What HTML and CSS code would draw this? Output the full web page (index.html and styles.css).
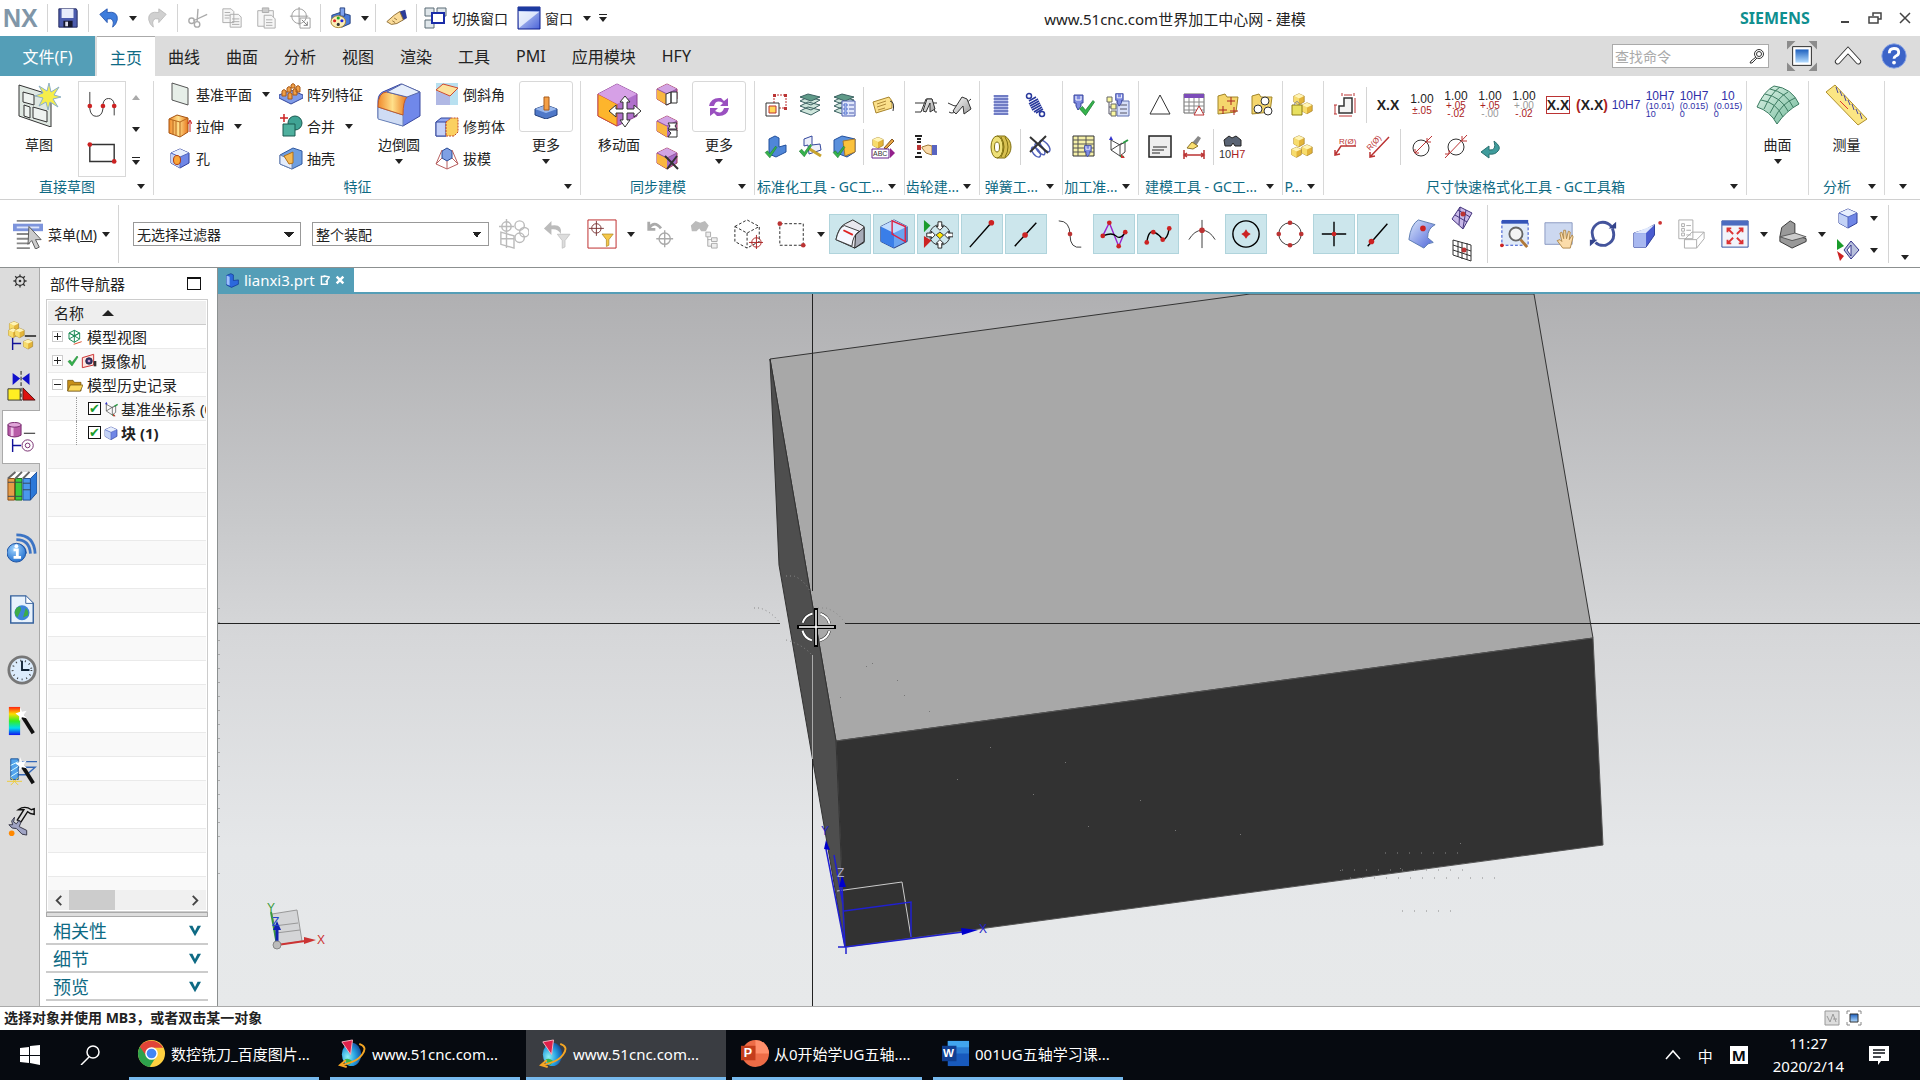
FILE: index.html
```html
<!DOCTYPE html>
<html lang="zh-CN">

<head>
  <meta charset="utf-8">
  <meta name="viewport" content="width=device-width, initial-scale=1">
  <title>www.51cnc.com世界加工中心网 - 建模</title>
  <link rel="stylesheet" href="styles.css">
</head>

<body>
  <!-- shared gradients and symbols -->
  <svg class="defs" aria-hidden="true">
    <defs>
      <linearGradient id="blue" x1="0" y1="0" x2="1" y2="1"><stop offset="0" stop-color="#dce8fb"/><stop offset="1" stop-color="#4a62d8"/></linearGradient>
      <linearGradient id="gold" x1="0" y1="0" x2="1" y2="1"><stop offset="0" stop-color="#fdf3a8"/><stop offset="1" stop-color="#e0a52c"/></linearGradient>
      <linearGradient id="orange" x1="0" y1="0" x2="1" y2="0"><stop offset="0" stop-color="#f08a2c"/><stop offset=".5" stop-color="#ffe08a"/><stop offset="1" stop-color="#e87820"/></linearGradient>
      <linearGradient id="grey" x1="0" y1="0" x2="1" y2="1"><stop offset="0" stop-color="#fff"/><stop offset="1" stop-color="#9a9a9a"/></linearGradient>
      <linearGradient id="green" x1="0" y1="0" x2="1" y2="1"><stop offset="0" stop-color="#e4f6ec"/><stop offset="1" stop-color="#6fb898"/></linearGradient>
      <linearGradient id="rainbow" x1="0" y1="0" x2="0" y2="1"><stop offset="0" stop-color="#f21"/><stop offset=".25" stop-color="#fd0"/><stop offset=".5" stop-color="#3e2"/><stop offset=".75" stop-color="#0de"/><stop offset="1" stop-color="#11e"/></linearGradient>
      <linearGradient id="screen" x1="0" y1="0" x2="0" y2="1"><stop offset="0" stop-color="#1c5fbe"/><stop offset="1" stop-color="#b4dcff"/></linearGradient>
      <radialGradient id="ball" cx=".4" cy=".3" r=".8"><stop offset="0" stop-color="#9fd4ff"/><stop offset="1" stop-color="#1464c8"/></radialGradient>
      <radialGradient id="globe" cx=".3" cy=".6" r=".8"><stop offset="0" stop-color="#8cf0f4"/><stop offset=".5" stop-color="#28a0e0"/><stop offset="1" stop-color="#0c3c90"/></radialGradient>
    </defs>
    <symbol id="cube" viewBox="0 0 24 24">
      <path d="M3 7l9-4 9 4v10l-9 5-9-5z" fill="#6f86e6" stroke="#2f3f9a"/>
      <path d="M3 7l9 4v11l-9-5z" fill="#c3d2f6"/><path d="M3 7l9-4 9 4-9 4z" fill="#e8effd"/>
      <path d="M3 7l9 4 9-4M12 11v11" fill="none" stroke="#5468c0"/>
    </symbol>
    <symbol id="pcube" viewBox="0 0 24 24">
      <path d="M2 7l10-5 10 5v10l-10 6-10-6z" fill="#a66cc8" stroke="#a63a5a"/>
      <path d="M2 7l10 5v11L2 17z" fill="#f9b640"/><path d="M2 7l10-5 10 5-10 5z" fill="#d2a4e4"/>
      <path d="M2 7l10 5 10-5" fill="none" stroke="#94549e"/>
    </symbol>
    <symbol id="ycube" viewBox="0 0 24 24">
      <path d="M3 7l9-4 9 4v10l-9 5-9-5z" fill="#e3b43a" stroke="#94701a"/>
      <path d="M3 7l9 4v11l-9-5z" fill="#f7dc6c"/><path d="M3 7l9-4 9 4-9 4z" fill="#fff4b4"/>
    </symbol>
    <symbol id="check" viewBox="0 0 24 24"><path d="M2 13l4-3 4 5L20 2l2 2-12 18z" fill="#35b34c" stroke="#1b7a30"/></symbol>
    <symbol id="sheets" viewBox="0 0 24 24">
      <path d="M2 18l8-4 12 3-9 5zM2 13l8-4 12 3-9 5zM2 8l8-4 12 3-9 5z" fill="#cfe6dc" stroke="#3c6262"/>
      <path d="M2 4l8-3 12 3-9 4z" fill="#5f9a88" stroke="#3c6262"/>
    </symbol>
    <symbol id="cutter" viewBox="0 0 24 24"><path d="M2 2h9v8H9v3l-3 4-2-4v-3H2z" fill="#7d8ae0" stroke="#39459c"/><path d="M4 3v4h5V3" fill="none" stroke="#fff"/></symbol>
    <symbol id="csys" viewBox="0 0 24 24"><path d="M5 3v12l9 6M5 15l11-7M5 5l9 5v11M14 10l5-3v10l-5 4" fill="none" stroke="#444"/><path d="M17 8l5-3M14 21l4 1" stroke="#2a9a44" stroke-width="2"/><path d="M3 5l2-4 2 4z" fill="#33c"/><path d="M15 19l4 4h-4z" fill="#c33"/></symbol>
    <symbol id="funnel" viewBox="0 0 24 24"><path d="M3 3h18l-7 9v9l-4 2V12z"/></symbol>
    <symbol id="nxball" viewBox="0 0 30 30">
      <ellipse cx="14" cy="16" rx="10" ry="12" fill="url(#globe)"/><path d="M7 21q4-2 8 2l-3 4q-4-2-5-6z" fill="#39b54a"/>
      <path d="M4 3l11-2-2 15z" fill="#e0204a" stroke="#f8b0c0"/><path d="M22 5q9 3 3 11-4 6-14 9l-7 2M8 22l-6 5 7 2" fill="none" stroke="#f5a623" stroke-width="2"/>
    </symbol>
  </svg>

  <header class="titlebar">
    <span class="nx">NX</span><i class="sep"></i>
    <button class="qa" title="保存"><svg viewBox="0 0 24 24"><path d="M2 2h19l1 2v18H2z" fill="#4c5cae" stroke="#20265c"/><path d="M5 2h13v10H5z" fill="#e8ecfb"/><path d="M7 15h10v7H7z" fill="#16182e"/><path d="M9 16h3v5H9z" fill="#dde"/></svg></button><i class="sep"></i>
    <button class="qa" title="撤消"><svg viewBox="0 0 24 24"><path d="M2 8l8-6v4q12-2 11 8-1 5-5 8 3-11-6-9v4z" fill="#3f7ddc" stroke="#2858b0"/></svg></button>
    <button class="dd" title="撤消列表"></button>
    <button class="qa" title="重做"><svg viewBox="0 0 24 24"><path d="M22 8l-8-6v4Q2 4 3 14q1 5 5 8-3-11 6-9v4z" fill="#d0d0d0" stroke="#bbb"/></svg></button><i class="sep"></i>
    <button class="qa" title="剪切"><svg viewBox="0 0 24 24" fill="none" stroke="#aaa" stroke-width="1.500"><path d="M12 2l-1 14M22 8L7 15"/><circle cx="5" cy="15" r="3"/><circle cx="11" cy="19" r="3"/></svg></button>
    <button class="qa" title="复制"><svg viewBox="0 0 24 24" fill="#f6f6f6" stroke="#aaa"><path d="M2 2h9l3 3v12H2zM10 8h9l3 3v11H10z"/><path d="M4 6h6M4 9h6M4 12h5M12 13h8M12 16h8M12 19h8"/></svg></button>
    <button class="qa" title="粘贴"><svg viewBox="0 0 24 24" fill="#f6f6f6" stroke="#aaa"><path d="M3 4h17v17H3z"/><path d="M8 1h7v5H8z" fill="#ccc"/><path d="M10 9h8l4 4v10H10z"/><path d="M12 14h7M12 17h7M12 20h7"/></svg></button>
    <button class="qa" title="定位"><svg viewBox="0 0 24 24" fill="none" stroke="#999"><circle cx="11" cy="10" r="8"/><path d="M11 0v20M1 10h20M12 12h11v11H12z"/><path d="M14 14l6 6m0-4v4h-4" stroke="#777"/></svg></button><i class="sep"></i>
    <button class="qa" title="调色板"><svg viewBox="0 0 24 24"><path d="M2 9l9-3 11 3v9l-9 4-11-4z" fill="#4a7ad8" stroke="#23407c"/><path d="M11 1h5v9h-5z" fill="#7fa2ec" stroke="#23407c"/><ellipse cx="9" cy="16" rx="8" ry="6.500" fill="#fbeeb8" stroke="#a8842c"/><circle cx="5" cy="15" r="1.700" fill="#d22"/><circle cx="9" cy="12" r="1.700" fill="#2a2"/><circle cx="13" cy="15" r="1.700" fill="#22d"/><circle cx="9" cy="19" r="1.700" fill="#333"/></svg></button>
    <button class="dd" title="显示列表"></button><i class="sep"></i>
    <button class="qa" title="触摸"><svg viewBox="0 0 24 24"><path d="M16 5l6-2 2 9-5 3z" fill="#2c3c98"/><path d="M2 16l8-7 6-4 4 9-7 4-6 1z" fill="#fbdc9a" stroke="#8c6a30"/><path d="M10 12l3 2M8 15l3 2" stroke="#8c6a30"/></svg></button><i class="sep"></i>
    <button class="wide"><svg viewBox="0 0 24 24"><path d="M1 2h9v8H1zM13 2h9v8h-9zM1 14h9v8H1z" fill="#dfe6ea" stroke="#5a6a74"/><path d="M8 7h12v10H8z" fill="#fff" stroke="#1a2ca8" stroke-width="2"/></svg>切换窗口</button>
    <button class="wide"><svg viewBox="0 0 24 24"><path d="M1 1h22v22H1z" fill="url(#blue)" stroke="#0c1c8c"/><path d="M1 1h22v4H1z" fill="#1c3aa0"/><path d="M2 6h20L2 22z" fill="#f2f7ff" opacity=".8"/></svg>窗口<i class="tri"></i></button>
    <button class="dd bar" title="自定义"></button>
    <h1>www.51cnc.com世界加工中心网 - 建模</h1>
    <span class="siemens">SIEMENS</span>
    <button class="win" title="最小化"><svg viewBox="0 0 14 14"><path d="M3 11h8" stroke="#444" stroke-width="2"/></svg></button>
    <button class="win" title="还原"><svg viewBox="0 0 14 14" fill="none" stroke="#444" stroke-width="1.500"><path d="M5 5V2h8v6h-3M1 6h9v6H1z"/></svg></button>
    <button class="win" title="关闭"><svg viewBox="0 0 14 14"><path d="M2 2l10 10M12 2L2 12" stroke="#444" stroke-width="1.500"/></svg></button>
  </header>

  <nav class="tabs">
    <button class="file">文件(F)</button>
    <button class="active">主页</button>
    <button>曲线</button>
    <button>曲面</button>
    <button>分析</button>
    <button>视图</button>
    <button>渲染</button>
    <button>工具</button>
    <button>PMI</button>
    <button>应用模块</button>
    <button>HFY</button>
    <label class="search"><input type="text" placeholder="查找命令" aria-label="查找命令"><svg viewBox="0 0 16 16" fill="none" stroke="#333"><circle cx="10" cy="6" r="4.500"/><circle cx="10" cy="6" r="2.500"/><path d="M7 9l-5 4-1 2 2 0 5-5" fill="#fff"/></svg></label>
    <button class="round" title="全屏"><svg viewBox="0 0 32 32"><path d="M0 0h9L0 9zM32 0v9l-9-9zM0 32v-9l9 9zM32 32h-9l9-9z" fill="#8c8c8c"/><path d="M6 6h20v20H6z" fill="#fff" stroke="#222"/><path d="M9 9h14v14H9z" fill="url(#screen)"/></svg></button>
    <button class="round" title="最小化功能区"><svg viewBox="0 0 32 32"><path d="M5 22l11-12 11 12" fill="none" stroke="#333" stroke-width="6" stroke-linecap="round"/><path d="M5 22l11-12 11 12" fill="none" stroke="#fff" stroke-width="4" stroke-linecap="round"/></svg></button>
    <button class="round" title="帮助"><svg viewBox="0 0 32 32"><circle cx="16" cy="16" r="13" fill="#3c64c8" stroke="#8aa4e4"/><path d="M11 13q0-5 5-5t5 4q0 3-3 4-2 1-2 3" fill="none" stroke="#fff" stroke-width="3"/><circle cx="16" cy="23" r="2" fill="#fff"/></svg></button>
  </nav>

  <section class="ribbon">
    <div class="group">
      <div class="body">
        <button class="big first"><svg viewBox="0 0 44 44"><path d="M2 2l32 10v32L2 33z" fill="#dfe8e2" stroke="#333"/><path d="M6 9l11 3v10L6 19zM7 22l6 2v11l-6-2zM16 24l14 4v11l-14-4z" fill="#eef3f0" stroke="#333"/><path d="M32 0l2 9 8-5-5 8 7 2-8 2 5 8-8-5-2 8-2-8-7 4 4-8-8-2 8-3-4-7 8 5z" fill="#f6ee4a" stroke="#8cb0c8"/></svg>草图</button>
        <div class="gallery">
          <button title="轮廓"><svg viewBox="0 0 32 32"><path d="M3 1v18q1 8 7 8t7-8V14q1-6 6-6t6 6v12" fill="none" stroke="#333"/><g fill="#c22"><circle cx="3" cy="16" r="2.500"/><circle cx="17" cy="16" r="2.500"/><circle cx="29" cy="16" r="2.500"/></g></svg></button>
          <button title="矩形"><svg viewBox="0 0 32 32"><path d="M3 7h26v18H3z" fill="none" stroke="#333" stroke-width="1.500"/><g fill="#c22"><circle cx="3" cy="7" r="2.500"/><circle cx="29" cy="25" r="2.500"/></g></svg></button>
        </div>
        <div class="scroller"><button class="dd up" title="上一行"></button><button class="dd" title="下一行"></button><button class="dd bar" title="展开"></button></div>
      </div>
      <footer><span>直接草图</span><button class="dd" title="直接草图选项"></button></footer>
    </div>

    <div class="group">
      <div class="body features">
        <div class="rows">
          <button><svg viewBox="0 0 24 24"><path d="M4 1l16 5v17L4 18z" fill="#e6eee8" stroke="#555"/></svg>基准平面<i class="tri far"></i></button>
          <button><svg viewBox="0 0 24 24"><path d="M1 5l8-4 11 3v14l-8 5-11-4z" fill="url(#orange)" stroke="#a65412"/><path d="M1 5l11 3 8-4M12 8v15M5 6v14M8 7v14" fill="none" stroke="#b8681e"/><path d="M22 18V7m-2 3l2-4 2 4" stroke="#c22" fill="none"/></svg>拉伸<i class="tri"></i></button>
          <button><svg viewBox="0 0 24 24"><use href="#cube"/><ellipse cx="9" cy="14" rx="3.500" ry="4.500" fill="#f9a63a" stroke="#b03a10"/></svg>孔</button>
        </div>
        <div class="rows">
          <button><svg viewBox="0 0 24 24"><path d="M0 13l12-5 12 5v3l-12 6-12-6z" fill="#7f9be8" stroke="#33479c"/><path d="M3 9q2-3 4 0v5H3zM9 12q2-3 4 0v5H9zM8 6q2-3 4 0v4H8zM14 8q2-3 4 0v5h-4zM12 3q2-3 4 0v3h-4zM17 5q2-3 4 0v5h-4z" fill="#f0a048" stroke="#a85a18"/></svg>阵列特征</button>
          <button><svg viewBox="0 0 24 24"><circle cx="16" cy="9" r="7" fill="#3fa394" stroke="#1a5a50"/><path d="M4 10h12v12H4z" fill="#4fb09e" stroke="#1a5a50"/><path d="M5 0v8M1 4h8" stroke="#c22" stroke-width="1.500"/></svg>合并<i class="tri"></i></button>
          <button><svg viewBox="0 0 24 24"><path d="M1 9l13-7 9 3v13l-10 5-12-5z" fill="#6f9fe0" stroke="#3058a0"/><path d="M1 9l12 5v9L1 18z" fill="#e4ecfa" stroke="#6a82b0"/><path d="M5 10l9-4v11l-4 1z" fill="#f5b954" stroke="#b07018"/></svg>抽壳</button>
        </div>
        <button class="big"><svg viewBox="0 0 44 44"><path d="M1 18Q1 10 8 8L24 1l19 8v24L26 43 1 35z" fill="#7088ea" stroke="#3848a0"/><path d="M1 24l25 8v11L1 36z" fill="#cfdcf4" stroke="#6a82b8"/><path d="M1 24Q1 9 10 9l20 5q-4 4-4 18z" fill="url(#orange)" stroke="#c25a28"/><path d="M10 9l15-8 18 8-13 5z" fill="#e6eefb" stroke="#5868a8"/></svg>边倒圆<i class="tri"></i></button>
        <div class="rows">
          <button><svg viewBox="0 0 24 24"><path d="M1 1h22v22H1z" fill="#b8e0f0"/><path d="M1 9l14 5v9H1z" fill="#b0b8e4"/><path d="M1 8l7-6 15 4-8 8z" fill="#fce29c" stroke="#d04830"/></svg>倒斜角</button>
          <button><svg viewBox="0 0 24 24"><path d="M1 8l5-4h10v14l-5 4H1z" fill="#8fa4ee" stroke="#33479c"/><path d="M1 8h10v14H1z" fill="#c4d0f8" stroke="#33479c"/><path d="M11 8l5-4h7v14l-4 4h-8z" fill="#fbd060" stroke="#c04828" stroke-dasharray="2 1"/></svg>修剪体</button>
          <button><svg viewBox="0 0 24 24"><path d="M7 5l5-3 5 3v7l-5 3-5-3z" fill="#7fa0e4" stroke="#2a4a94"/><path d="M7 4L1 18l11 5 11-5-6-14M12 15v8M1 18l6-6M23 18l-6-6" fill="none" stroke="#b86060"/></svg>拔模</button>
        </div>
        <button class="big more"><span class="frame"><svg viewBox="0 0 24 24"><path d="M1 14l11-4 11 4v6l-11 4-11-4z" fill="#4f78c8" stroke="#23407c"/><path d="M1 14l11-4 11 4-11 4z" fill="#9ab8ec"/><path d="M10 2h5v13h-5z" fill="#f4a048" stroke="#a85a18"/></svg></span>更多<i class="tri"></i></button>
      </div>
      <footer><span>特征</span><button class="dd" title="特征选项"></button></footer>
    </div>

    <div class="group">
      <div class="body sync">
        <button class="big"><svg viewBox="0 0 44 44"><path d="M1 11L20 1l20 10v22L20 43 1 33z" fill="#b070cc" stroke="#8c4090"/><path d="M1 11l19 10v22L1 33z" fill="#fdb52c" stroke="#d05030"/><path d="M1 11L20 1l20 10-20 10z" fill="#d6a0e6"/><path d="M28 13l5 6h-3v7h7v-4l7 6-7 6v-4h-7v7h3l-5 7-5-7h3v-7h-7v4l-7-6 7-6v4h7v-7h-3z" fill="#fff" stroke="#333"/></svg>移动面</button>
        <div class="rows icons">
          <button title="拉出面"><svg viewBox="0 0 24 24"><use href="#pcube"/><path d="M11 12l5-2v11l-5 2zM16 10h6v11h-6z" fill="#fff" stroke="#333"/></svg></button>
          <button title="替换面"><svg viewBox="0 0 24 24"><use href="#pcube"/><path d="M13 9h9l-2 3 2 3h-9l2-3zM13 16h9v7h-9l3-4z" fill="#fff" stroke="#333"/></svg></button>
          <button title="删除面"><svg viewBox="0 0 24 24"><use href="#pcube"/><path d="M10 10l13 13M22 10L12 23" stroke="#333" stroke-width="2"/></svg></button>
        </div>
        <button class="big more"><span class="frame"><svg viewBox="0 0 24 24"><path d="M2 11Q4 2 14 3l3 3 4-3v8h-8l3-3q-7-4-9 3zM22 13q-2 9-12 8l-3-3-4 3v-8h8l-3 3q7 4 9-3z" fill="#9a50c0"/></svg></span>更多<i class="tri"></i></button>
      </div>
      <footer><span>同步建模</span><button class="dd" title="同步建模选项"></button></footer>
    </div>

    <div class="group">
      <div class="body grid2">
        <div>
          <button class="sm" title="部件间复制"><svg viewBox="0 0 24 24" fill="none" stroke="#333"><path d="M10 2h12v13H10z" stroke="#b33" stroke-dasharray="2 1"/><path d="M2 10h13v13H2z" fill="#fff"/><path d="M5 13h7v7H5z" fill="#ffd75a" stroke="#b33"/><path d="M9 1h3v3H9zM20 1h3v3h-3zM20 14h3v3h-3z" fill="#b33" stroke="none"/></svg></button>
          <button class="sm" title="图层"><svg viewBox="0 0 24 24"><use href="#sheets"/></svg></button>
          <button class="sm" title="图层列表"><svg viewBox="0 0 24 24"><use href="#sheets"/><path d="M10 8h13v15H10z" fill="#dfe6fb" stroke="#5060b0"/><path d="M12 11h3v2h-3zM12 15h3v2h-3zM12 19h3v2h-3z" fill="#fff" stroke="#46c"/><path d="M17 12h5M17 16h5M17 20h5" stroke="#5060b0"/></svg></button><i class="sep"></i>
          <button class="sm" title="属性"><svg viewBox="0 0 24 24"><path d="M2 9l16-5 3 4v7L5 20z" fill="#fbe08a" stroke="#a8842c"/><path d="M6 11l9-3M6 14l9-3M7 17l7-2" stroke="#b08a3a"/><path d="M19 8q5 1 3 10" fill="none" stroke="#333"/></svg></button>
        </div>
        <div>
          <button class="sm" title="检查模型"><svg viewBox="0 0 24 24"><path d="M5 4l6-3 4 2v9l7-2v7l-10 5-7-3z" fill="#4f86d8" stroke="#23509c"/><use href="#check" y="10" width="14" height="14"/></svg></button>
          <button class="sm" title="检查草图"><svg viewBox="0 0 24 24"><path d="M6 4l8-3v9l8-1 1 6-12 4-1-9-4 1z" fill="#eef0fb" stroke="#33479c"/><path d="M10 13l13 8" stroke="#c8a430" stroke-width="3"/><use href="#check" y="8" width="15" height="15"/></svg></button>
          <button class="sm" title="检查装配"><svg viewBox="0 0 24 24"><path d="M2 5l8-4 13 3v13l-8 5-13-5z" fill="#5a90dc" stroke="#23509c"/><path d="M11 6l12-2v13l-10 4z" fill="#fbc23c" stroke="#a8782c"/><use href="#check" y="10" width="14" height="14"/></svg></button><i class="sep"></i>
          <button class="sm" title="注释编辑"><svg viewBox="0 0 24 24"><use href="#ycube" width="14" height="15"/><path d="M13 13l8-9 2 2-8 8z" fill="#e8a848" stroke="#85541c"/><path d="M1 14h17v9H1z" fill="#fff" stroke="#66208c"/><text x="2" y="21" font-size="7" fill="#333">ABC</text><path d="M19 13l5 5-5 5z" fill="#94208c"/></svg></button>
        </div>
      </div>
      <footer><span>标准化工具 - GC工...</span><button class="dd" title="标准化工具选项"></button></footer>
    </div>

    <div class="group">
      <div class="body grid2">
        <div>
          <button class="sm" title="柱齿轮"><svg viewBox="0 0 24 24"><path d="M1 19h6l5-13h6l3 13h2M1 10h9M18 10h5" fill="none" stroke="#333"/><path d="M9 18l4-12h5l3 10-5 3 0-9-4 9z" fill="url(#grey)" stroke="#333"/></svg></button>
          <button class="sm" title="锥齿轮"><svg viewBox="0 0 24 24"><path d="M0 10q12 8 23-4M1 19q4 3 9-3" fill="none" stroke="#333"/><path d="M5 18L14 4l5 2 4 10-7 5-1-8-7 8z" fill="url(#grey)" stroke="#333"/></svg></button>
        </div>
        <div>
          <button class="sm" title="齿轮副"><svg viewBox="0 0 24 24"><path d="M1 1h7M3 4h4M3 7h4M3 18h4M1 22h7" stroke="#222" stroke-width="2"/><path d="M3 10h4v5H3z" fill="#b33"/><path d="M8 12l6-2 4 1v9l-6-2-4-5z" fill="#fbdcaa" stroke="#a07838"/><path d="M18 10h5v10h-5z" fill="#5864c0"/></svg></button>
        </div>
      </div>
      <footer><span>齿轮建...</span><button class="dd" title="齿轮建模选项"></button></footer>
    </div>

    <div class="group">
      <div class="body grid2">
        <div>
          <button class="sm" title="圆柱压缩弹簧"><svg viewBox="0 0 24 24"><path d="M5 2h14v20H5z" fill="#b8c0ec"/><path d="M5 3h14M5 6h14M5 9h14M5 12h14M5 15h14M5 18h14M5 21h14" stroke="#28389c" stroke-linecap="round"/></svg></button>
          <button class="sm" title="圆柱拉伸弹簧"><svg viewBox="0 0 24 24" fill="none" stroke="#28389c" stroke-width="1.500"><circle cx="6" cy="3" r="2.500"/><circle cx="19" cy="21" r="2.500"/><path d="M6 8l7-4M6 11l9-5M7 13l9-5M8 15l9-5M9 17l9-5M11 19l8-5M13 20l7-4"/></svg></button>
        </div>
        <div>
          <button class="sm" title="碟簧"><svg viewBox="0 0 24 24"><path d="M8 1h8q6 4 6 11t-6 11H8z" fill="#d8c050" stroke="#807010"/><path d="M12 2q6 10 0 20M16 2q6 10 0 20" fill="none" stroke="#807010"/><ellipse cx="8" cy="12" rx="6" ry="11" fill="#eee078" stroke="#807010"/><ellipse cx="8" cy="12" rx="2.500" ry="5" fill="#fff" stroke="#807010"/></svg></button><i class="sep"></i>
          <button class="sm" title="删除弹簧"><svg viewBox="0 0 24 24" fill="none" stroke="#5060b8" stroke-width="1.500"><ellipse cx="8" cy="17" rx="3" ry="6" transform="rotate(-40 8 17)"/><ellipse cx="12" cy="14" rx="3" ry="7" transform="rotate(-40 12 14)"/><ellipse cx="17" cy="11" rx="3" ry="7" transform="rotate(-40 17 11)"/><path d="M2 2l18 16M18 1L2 17" stroke="#333" stroke-width="2"/></svg></button>
        </div>
      </div>
      <footer><span>弹簧工...</span><button class="dd" title="弹簧工具选项"></button></footer>
    </div>

    <div class="group">
      <div class="body grid2">
        <div>
          <button class="sm" title="加工检查"><svg viewBox="0 0 24 24"><use href="#cutter"/><use href="#check" x="6" y="6" width="18" height="18"/></svg></button>
          <button class="sm" title="加工列表"><svg viewBox="0 0 24 24"><path d="M11 8h12v15H11z" fill="#d8e0f8" stroke="#6070b0"/><path d="M14 12h7M14 16h7M14 20h7M3 8v13h6M3 14h6" stroke="#556" fill="none"/><path d="M1 4h5v5H1zM5 11h5v5H5zM5 18h5v5H5z" fill="#fbf8a0" stroke="#666"/><use href="#cutter" x="8" y="-1" width="20" height="20"/></svg></button>
        </div>
        <div>
          <button class="sm" title="刀具表"><svg viewBox="0 0 24 24"><path d="M1 1h21v20H1z" fill="#f5f0a8" stroke="#333"/><path d="M1 5h21M1 9h21M1 13h21M1 17h21M6 1v20M14 1v20" stroke="#555"/><use href="#cutter" x="11" y="9" width="18" height="18"/></svg></button>
          <button class="sm" title="加工坐标系"><svg viewBox="0 0 24 24"><use href="#csys"/></svg></button>
        </div>
      </div>
      <footer><span>加工准...</span><button class="dd" title="加工准备选项"></button></footer>
    </div>

    <div class="group">
      <div class="body grid2">
        <div>
          <button class="sm" title="三角"><svg viewBox="0 0 24 24"><path d="M12 2l10 19H2z" fill="none" stroke="#333"/></svg></button>
          <button class="sm" title="表格"><svg viewBox="0 0 24 24"><path d="M2 1h20v19H2z" fill="#fff" stroke="#666"/><path d="M2 1h20v4H2z" fill="#7c4cb8"/><path d="M2 9h20M2 13h20M2 17h20M7 5v15M12 5v15M17 5v15" stroke="#888"/><path d="M17 13l5 9H12z" fill="#fff" stroke="#b33"/></svg></button>
          <button class="sm" title="点集"><svg viewBox="0 0 24 24"><path d="M2 3l7-2 2 3h11l-2 15-18 2z" fill="#f5d66c" stroke="#a08428"/><path d="M15 4v8M11 8h8M7 13v8M3 17h8M18 14v8M14 18h8" stroke="#a22"/></svg></button>
          <button class="sm" title="孔集"><svg viewBox="0 0 24 24"><path d="M2 3l7-2 2 3h11l-2 15-18 2z" fill="#f5d66c" stroke="#a08428"/><g fill="#fff" stroke="#333"><circle cx="15" cy="8" r="4"/><circle cx="8" cy="16" r="4"/><circle cx="18" cy="18" r="4"/></g></svg></button>
        </div>
        <div>
          <button class="sm" title="技术要求"><svg viewBox="0 0 24 24"><path d="M1 1h22v21H1z" fill="#eee" stroke="#222" stroke-width="1.500"/><path d="M5 12h14M4 15h12M4 18h8" stroke="#222"/></svg></button>
          <button class="sm" title="尺寸刷"><svg viewBox="0 0 24 24"><path d="M16 1l3 2-5 8-4-3z" fill="#888"/><path d="M10 7l6 4-5 3-6-1z" fill="#fbe070" stroke="#8c742c"/><path d="M2 15v9M22 15v9M2 20h20M5 18l-3 2 3 2M19 18l3 2-3 2" stroke="#b33" fill="none" stroke-width="1.500"/></svg></button><i class="sep"></i>
          <button class="sm" title="查询公差"><svg viewBox="0 0 24 24"><path d="M3 5l5-4 3 2 4-2 5 4v6h-6l-2-3-2 3H4z" fill="#5a6474" stroke="#222"/><text x="-2" y="23" font-size="11" fill="#333">10<tspan fill="#a22">H7</tspan></text></svg></button>
        </div>
      </div>
      <footer><span>建模工具 - GC工...</span><button class="dd" title="建模工具选项"></button></footer>
    </div>

    <div class="group">
      <div class="body grid2 slim">
        <div><button class="sm" title="部件锁定"><svg viewBox="0 0 24 24"><use href="#ycube" x="2" y="-1" width="14" height="14"/><use href="#ycube" x="10" y="8" width="14" height="14"/><path d="M2 12h10v10H2z" fill="#e8e060" stroke="#8c7c14"/><path d="M4 12q3-7 6 0" fill="none" stroke="#888"/></svg></button></div>
        <div><button class="sm" title="部件解锁"><svg viewBox="0 0 24 24"><use href="#ycube" x="2" y="-1" width="14" height="14"/><use href="#ycube" x="10" y="8" width="14" height="14"/><use href="#ycube" x="0" y="10" width="13" height="14"/></svg></button></div>
      </div>
      <footer><span>P...</span><button class="dd" title="部件选项"></button></footer>
    </div>

    <div class="group">
      <div class="body grid2 dims">
        <div>
          <button class="sm" title="快速尺寸"><svg viewBox="0 0 24 24"><path d="M11 5h8v15H6v-7h5z" fill="#f4f4f4" stroke="#333" stroke-width="1.500"/><path d="M11 2h8M9 0v3M21 0v3M2 12v9M1 12h3M1 21h3M6 23h13M22 5v15" stroke="#b33" fill="none"/></svg></button><i class="sep"></i>
          <button class="sm"><b class="plain">X.X</b></button>
          <button class="sm"><span class="tol">1.00<br><small>±.05</small></span></button>
          <button class="sm"><span class="tol">1.00<br><small>+.05<br>-.02</small></span></button>
          <button class="sm"><span class="tol">1.00<br><small>+.05<br><em>-.00</em></small></span></button>
          <button class="sm"><span class="tol">1.00<br><small><em>+.00</em><br>-.02</small></span></button>
          <button class="sm"><b class="plain boxed">X.X</b></button>
          <button class="sm"><b class="plain"><i>(</i>X.X<i>)</i></b></button>
          <button class="sm"><span class="fit">10H7</span></button>
          <button class="sm"><span class="fit">10H7<br><small>(10.01)<br>10</small></span></button>
          <button class="sm"><span class="fit">10H7<br><small>(0.015)<br>0</small></span></button>
          <button class="sm"><span class="fit">10<br><small>(0.015)<br>0</small></span></button>
        </div>
        <div>
          <button class="sm" title="水平半径"><svg viewBox="0 0 24 24"><path d="M23 11H8l-6 9m0-5v5l5-1" fill="none" stroke="#b33" stroke-width="1.500"/><text x="6" y="9" font-size="8" fill="#b33">R(Ø)</text></svg></button>
          <button class="sm" title="半径"><svg viewBox="0 0 24 24"><path d="M22 2L3 22m0-5v5l5-1" fill="none" stroke="#b33" stroke-width="1.500"/><text x="3" y="16" font-size="8" fill="#b33" transform="rotate(-47 3 16)">R(Ø)</text></svg></button><i class="sep"></i>
          <button class="sm" title="直径"><svg viewBox="0 0 24 24" fill="none" stroke="#333"><circle cx="11" cy="13" r="8"/><path d="M22 1L5 18m0-4v4h4M17 3v4h4" stroke="#b33"/></svg></button>
          <button class="sm" title="外侧直径"><svg viewBox="0 0 24 24" fill="none" stroke="#333"><circle cx="12" cy="12" r="8"/><path d="M23 0L1 23M5 15v4H1M18 1v5h5" stroke="#b33"/></svg></button>
          <button class="sm" title="应用"><svg viewBox="0 0 24 24"><path d="M16 6q8 6 4 10-3 4-9 3v4l-8-6 8-6v4q8 1 5-9z" fill="#3f9c9c" stroke="#2a7070"/></svg></button>
        </div>
      </div>
      <footer><span>尺寸快速格式化工具 - GC工具箱</span><button class="dd" title="尺寸工具选项"></button></footer>
    </div>

    <div class="group">
      <div class="body single">
        <button class="big"><svg viewBox="0 0 44 44"><path d="M1 24Q8 8 18 3q18 2 25 18Q30 28 21 41 14 28 1 24z" fill="url(#green)" stroke="#3a7a60"/><path d="M5 17q15 2 22 17M9 11q16 3 23 17M14 6q16 3 23 18M8 26Q15 10 24 4M14 30Q22 14 32 9M18 36Q26 20 39 15" fill="none" stroke="#3a7a60"/></svg>曲面<i class="tri"></i></button>
      </div>
    </div>

    <div class="group">
      <div class="body single">
        <button class="big"><svg viewBox="0 0 44 44"><path d="M10 2l32 34-9 6L1 9z" fill="#fbe684" stroke="#b0902c"/><path d="M11 4l2 6M15 8l2 5M19 12l2 6M23 17l2 5M27 21l2 6M31 26l2 5M35 30l2 6" stroke="#4a48a0"/><path d="M15 18l8 8" stroke="#d33"/></svg>测量</button>
      </div>
      <footer><span>分析</span><button class="dd" title="分析选项"></button></footer>
    </div>

    <div class="group end"><footer><button class="dd" title="功能区选项"></button></footer></div>
  </section>

  <section class="toolbar">
    <button class="menu"><svg viewBox="0 0 32 32"><path d="M4 2h26M4 16h14M4 21h14M4 26h14M4 31h14" stroke="#888" stroke-width="2"/><path d="M0 5h32v8H0z" fill="#7d94dc"/><path d="M4 8h24v2H4z" fill="#dce4fa"/><path d="M17 8l13 14h-6l4 8-4 2-4-9-4 4z" fill="#ccc" stroke="#555"/></svg><span>菜单(<u>M</u>)</span><i class="tri"></i></button>
    <i class="sep"></i>
    <select class="filter" aria-label="选择过滤器"><option>无选择过滤器</option></select>
    <select class="scope" aria-label="选择范围"><option>整个装配</option></select>
    <button class="tb" title="链接"><svg viewBox="0 0 32 32" fill="none" stroke="#bbb" stroke-width="1.500"><circle cx="8" cy="8" r="5"/><path d="M8 0v31M0 8h16M2 14l14 4v13L2 27zM2 21h14"/><circle cx="22" cy="7" r="5"/><circle cx="27" cy="14" r="5"/><circle cx="22" cy="20" r="5"/></svg></button>
    <button class="tb" title="重置过滤器"><svg viewBox="0 0 32 32"><path d="M1 10l8-8v5q12-2 10 9-3-6-10-5v6z" fill="#bbb"/><use href="#funnel" x="13" y="14" width="18" height="18" fill="#ddd" stroke="#bbb"/></svg></button>
    <button class="tb" title="常规选择过滤器"><svg viewBox="0 0 32 32"><path d="M1 1h30v30H1z" fill="#fff" stroke="#b22"/><circle cx="10" cy="10" r="5" fill="none" stroke="#733"/><path d="M10 2v16M2 10h16" stroke="#733"/><use href="#funnel" x="14" y="14" width="16" height="16" fill="#f5c84a" stroke="#a07818"/></svg></button>
    <button class="dd" title="过滤器列表"></button>
    <button class="tb" title="取消选择"><svg viewBox="0 0 32 32" fill="none" stroke="#aaa" stroke-width="1.500"><path d="M4 10q6-9 13 0M4 3v8h7" stroke-width="3"/><circle cx="21" cy="21" r="6"/><path d="M21 12v18M12 21h18"/></svg></button>
    <button class="tb" title="在导航器中查找"><svg viewBox="0 0 32 32"><path d="M2 7l5-5 5 2 5-2 4 5-3 6h-5l-2-3-3 3H3z" fill="#bbb"/><path d="M18 14h5v5h-5zM24 20h6v4h-6zM24 26h6v5h-6zM20 19v10h4M20 22h4" fill="#eee" stroke="#aaa"/></svg></button>
    <button class="tb" title="实体"><svg viewBox="0 0 32 32" fill="none" stroke="#222" stroke-dasharray="3 2"><path d="M2 8l13-7 13 7v16l-13 7L2 24zM2 8l13 7 13-7M15 15v16"/><g stroke="#a22" stroke-dasharray="none"><circle cx="25" cy="25" r="5"/><path d="M25 17v15M17 25h15"/></g></svg></button>
    <button class="tb" title="矩形选择"><svg viewBox="0 0 32 32"><path d="M3 5h25v23H3z" fill="none" stroke="#222" stroke-dasharray="3 2"/><circle cx="3" cy="5" r="2.500" fill="#b33"/><circle cx="28" cy="28" r="2.500" fill="#b33"/></svg></button>
    <button class="dd" title="选择方式"></button>
    <button class="tb on" title="面"><svg viewBox="0 0 32 32"><path d="M1 22Q4 8 11 5l8-4 12 7v17l-10 6z" fill="#e8e8ee" stroke="#222"/><path d="M1 22Q4 9 10 7l16 6q-7 4-8 16z" fill="#f4f8ff" stroke="#333"/><path d="M9 12l10 5" stroke="#d22" stroke-width="2"/><path d="M22 17l9-8v15l-10 7z" fill="#a8acb8" stroke="#222"/></svg></button>
    <button class="tb on" title="体"><svg viewBox="0 0 32 32"><path d="M2 8l14-7 14 7v16l-14 7-14-7z" fill="#6aa4f0" stroke="#22347c"/><path d="M2 8l14 7v16L2 24z" fill="#3a7ee8"/><path d="M2 8l14-7 14 7-14 7z" fill="#c0dcff"/><path d="M14 2v14l14 8V8z" fill="none" stroke="#d24" stroke-width="1.500"/></svg></button>
    <button class="tb on" title="定向"><svg viewBox="0 0 32 32"><path d="M1 1l7 6-7 7z" fill="#1a9c2c"/><path d="M1 18l8 5-8 8z" fill="#c22"/><circle cx="18" cy="17" r="11" fill="none" stroke="#333"/><path d="M18 14l4 3-4 4-4-4z" fill="#ffe800" stroke="#333"/><path d="M18 12l-4-4h2V3h4v5h2zM18 22l-4 4h2v5h4v-5h2zM13 17l-4-4v2H4v4h5v2zM23 17l4-4v2h5v4h-5v2z" fill="#fff" stroke="#222"/></svg></button>
    <button class="tb on" title="端点"><svg viewBox="0 0 32 32"><path d="M3 30L25 5" stroke="#000" stroke-width="1.500"/><circle cx="26" cy="4" r="3" fill="#c22"/></svg></button>
    <button class="tb on" title="中点"><svg viewBox="0 0 32 32"><path d="M4 29L27 4" stroke="#000" stroke-width="1.500"/><circle cx="15" cy="17" r="3" fill="#c22"/></svg></button>
    <button class="tb" title="相切点"><svg viewBox="0 0 32 32"><path d="M4 2q12 0 12 15t12 13" fill="none" stroke="#333"/><circle cx="16" cy="16" r="2.500" fill="#b33"/></svg></button>
    <button class="tb on" title="控制点"><svg viewBox="0 0 32 32"><path d="M4 18L11 4l10 25 6-14" fill="none" stroke="#92c" stroke-width="1.500"/><path d="M4 18q10-4 14 0t9-2" fill="none" stroke="#000" stroke-width="1.500"/><g fill="#c22"><circle cx="4" cy="18" r="2.500"/><circle cx="11" cy="4" r="2.500"/><circle cx="21" cy="29" r="2.500"/><circle cx="28" cy="14" r="2.500"/></g></svg></button>
    <button class="tb on" title="极点"><svg viewBox="0 0 32 32"><path d="M4 25Q6 11 12 14t9 8q5 0 7-12" fill="none" stroke="#000" stroke-width="1.500"/><g fill="#c22"><circle cx="4" cy="25" r="2.500"/><circle cx="11" cy="14" r="2.500"/><circle cx="21" cy="22" r="2.500"/><circle cx="28" cy="10" r="2.500"/></g></svg></button>
    <button class="tb" title="交点"><svg viewBox="0 0 32 32"><path d="M16 1v30M2 22q6-10 14-10t14 10" fill="none" stroke="#333"/><circle cx="16" cy="12" r="3" fill="#b33"/></svg></button>
    <button class="tb on" title="圆心"><svg viewBox="0 0 32 32"><circle cx="16" cy="16" r="14" fill="none" stroke="#000" stroke-width="1.500"/><path d="M16 11l2 3 3 2-3 2-2 3-2-3-3-2 3-2z" fill="#c22"/></svg></button>
    <button class="tb" title="象限点"><svg viewBox="0 0 32 32"><circle cx="16" cy="16" r="12" fill="none" stroke="#333"/><g fill="#b33"><circle cx="16" cy="4" r="2.500"/><circle cx="16" cy="28" r="2.500"/><circle cx="4" cy="16" r="2.500"/><circle cx="28" cy="16" r="2.500"/></g></svg></button>
    <button class="tb on" title="现有点"><svg viewBox="0 0 32 32"><path d="M16 3v26M3 16h26" stroke="#000" stroke-width="1.500"/><circle cx="16" cy="16" r="2.500" fill="#c22"/></svg></button>
    <button class="tb on" title="曲线上的点"><svg viewBox="0 0 32 32"><path d="M5 29L26 5" stroke="#000" stroke-width="1.500"/><circle cx="9" cy="24" r="3" fill="#c22"/></svg></button>
    <button class="tb" title="面上的点"><svg viewBox="0 0 32 32"><path d="M2 22Q4 6 12 1l18 5q-8 4-8 14l6 5q-6 0-10 6z" fill="url(#blue)" stroke="#5a7ab0"/><circle cx="17" cy="10" r="3" fill="#c22"/></svg></button>
    <div class="stack">
      <button title="小平面"><svg viewBox="0 0 24 24"><path d="M2 13L10 1l12 6-9 16z" fill="#c8b8e8" stroke="#44347c"/><path d="M5 9l12 7M8 4l12 7M10 1l-1 18M16 4l-3 18" stroke="#44347c"/><circle cx="13" cy="8" r="2.500" fill="#b33"/></svg></button>
      <button title="栅格"><svg viewBox="0 0 24 24"><path d="M3 2l18 5v16L3 17zM3 7l18 6M3 12l18 6M8 3v16M12 4v17M17 5v17" fill="none" stroke="#333"/><circle cx="14" cy="12" r="2.500" fill="#b33"/></svg></button>
    </div>
    <i class="sep"></i>
    <button class="tb view" title="缩放窗口"><svg viewBox="0 0 32 32"><path d="M2 2h28v26H2z" fill="#e0eaf8" stroke="#24c" stroke-dasharray="3 2"/><path d="M2 1h28v4H2z" fill="#3454b8"/><circle cx="17" cy="16" r="7" fill="#f4f4f4" stroke="#666" stroke-width="2"/><path d="M22 22l7 8" stroke="#b07838" stroke-width="3"/><circle cx="2" cy="28" r="2" fill="#c22"/></svg></button>
    <button class="tb" title="平移"><svg viewBox="0 0 32 32"><path d="M1 4h29v23H1z" fill="#ccd8f0" stroke="#8898c0"/><path d="M20 31l-6-8 3-1 2 2-2-9 2-1 2 7 0-9h2l1 9 2-8 2 1-1 8 3-5 1 2-3 12z" fill="#fbdcaa" stroke="#b08848"/></svg></button>
    <button class="tb" title="旋转"><svg viewBox="0 0 32 32" fill="none" stroke="#44549c" stroke-width="3"><path d="M7 24Q0 10 12 4q8-2 13 4M26 10q5 13-7 18-7 1-11-3"/><path d="M22 10h8V3zM10 22H2v7z" fill="#34448c" stroke="none"/></svg></button>
    <button class="tb" title="透视"><svg viewBox="0 0 32 32"><path d="M2 15l13-4 9-5v11l-9 13H2z" fill="#4a5cd0" stroke="#2c3c98"/><path d="M2 15h13v15H2z" fill="#a8b8f0"/><path d="M2 15l12-5 10-4-9 9z" fill="#e0e8fc"/><circle cx="30" cy="4" r="2" fill="#c33"/></svg></button>
    <button class="tb" title="显示"><svg viewBox="0 0 32 32" fill="none" stroke="#aaa"><path d="M3 1h15v20H3zM6 5h3v3H6zM6 10h3v3H6zM6 15h3v3H6zM11 7h5M11 12h5M11 17h5M9 22h13v9H9zM9 22l8-8h13l-8 8M30 14v7l-8 10"/></svg></button>
    <button class="tb" title="适合窗口"><svg viewBox="0 0 32 32"><path d="M2 2h28v28H2z" fill="#f2f4fa" stroke="#2c4c9c"/><path d="M2 2h28v5H2z" fill="#4c6cc0"/><path d="M14 16l-6-6m0 4v-4h4M18 16l6-6m0 4v-4h-4M14 20l-6 6m0-4v4h4M18 20l6 6m0-4v4h-4" fill="none" stroke="#d33" stroke-width="2"/></svg></button>
    <button class="dd" title="视图列表"></button>
    <button class="tb" title="编辑截面"><svg viewBox="0 0 32 32"><path d="M2 19L4 9l9-7 5 3v12l12 4v3L15 31 2 24z" fill="#999" stroke="#333"/><path d="M2 19l13 4 15-4-12-4z" fill="#ccc" stroke="#555"/></svg></button>
    <button class="dd" title="截面列表"></button>
    <div class="stack pairs">
      <div><button title="带边着色"><svg viewBox="0 0 24 24"><use href="#cube"/></svg></button><button class="dd" title="渲染样式"></button></div>
      <div><button title="定向视图"><svg viewBox="0 0 24 24"><path d="M1 1l7 7-7 4z" fill="#1a9c2c"/><path d="M1 13l7 5-4 5z" fill="#c22"/><path d="M15 3l8 9-8 9-7-9z" fill="#b8c0dc" stroke="#34348c"/><path d="M15 7v11l-4-6z" fill="#fff" stroke="#34348c"/></svg></button><button class="dd" title="视图方向"></button></div>
    </div>
    <i class="sep"></i>
    <button class="dd last" title="工具条选项"></button>
  </section>

  <main>
    <nav class="rail">
      <button class="gear" title="设置"><svg viewBox="0 0 32 32"><circle cx="16" cy="16" r="10" fill="none" stroke="#333" stroke-width="3"/><path d="M16 1v6M16 25v6M1 16h6M25 16h6M5 5l4 4M23 23l4 4M27 5l-4 4M5 27l4-4" stroke="#333" stroke-width="3"/><circle cx="16" cy="16" r="3" fill="#333"/></svg></button>
      <button title="装配导航器"><svg viewBox="0 0 32 32"><use href="#ycube" x="1" y="-1" width="13" height="13"/><use href="#ycube" x="0" y="6" width="13" height="13"/><use href="#ycube" x="7" y="6" width="13" height="13"/><use href="#ycube" x="16" y="18" width="13" height="13"/><path d="M6 18v13M6 24h9" stroke="#119" fill="none" stroke-width="1.500"/><path d="M19 16h12" stroke="#111" stroke-width="1.500"/></svg></button>
      <button title="约束导航器"><svg viewBox="0 0 32 32"><path d="M6 2l8 6-8 7zM24 2l-8 6 8 7z" fill="#11c"/><path d="M1 19h13v12H1z" fill="#fe2" stroke="#333"/><path d="M17 18l13 13H17z" fill="#d11" stroke="#511"/><path d="M15 0v32" stroke="#111" stroke-dasharray="4 2"/></svg></button>
      <button class="active" title="部件导航器"><svg viewBox="0 0 32 32"><path d="M1 3v11q7 4 14 0V3z" fill="#b85ca8" stroke="#74286c"/><path d="M4 5v10h3V5z" fill="#eec4e8"/><ellipse cx="8" cy="3" rx="7" ry="2.500" fill="#e0a4d8" stroke="#74286c"/><path d="M6 18v14M6 25h9" stroke="#119" stroke-width="1.500"/><path d="M18 12h12" stroke="#111"/><circle cx="22" cy="25" r="6" fill="none" stroke="#74286c"/><circle cx="22" cy="25" r="2.500" fill="none" stroke="#74286c"/></svg></button>
      <button title="重用库"><svg viewBox="0 0 32 32"><path d="M1 8l8-7h23v22l-8 8H1z" fill="#fff"/><path d="M1 8h7v23H1z" fill="#e69c48" stroke="#854a14"/><path d="M9 8h7v23H9z" fill="#3ccc3c" stroke="#1c6c1c"/><path d="M17 8h8v23h-8z" fill="#4a98ec" stroke="#1c4c94"/><path d="M25 8l7-7v22l-7 8z" fill="#2c78d8" stroke="#1c4c94"/><path d="M1 8l8-7M9 8l7-7M17 8l7-7" stroke="#666" stroke-width="2"/><path d="M1 12h7M9 12h7M17 13h8M17 20h8M1 27h7M9 27h7" stroke="#345"/></svg></button>
      <button title="HD3D 工具"><svg viewBox="0 0 32 32"><path d="M10 2q19 0 20 20M10 7q14 0 15 15M11 13q8 0 9 9" fill="none" stroke="#3c74c4" stroke-width="3"/><circle cx="10" cy="21" r="10" fill="url(#ball)" stroke="#1c50a0"/><path d="M7 18h4v8m-4 0h8" stroke="#fff" stroke-width="3" fill="none"/><circle cx="10" cy="14" r="2" fill="#fff"/></svg></button>
      <button title="Web 浏览器"><svg viewBox="0 0 32 32"><path d="M4 2h16l8 8v21H4z" fill="#e8f2fc" stroke="#34609c" stroke-width="1.500"/><path d="M20 2v8h8" fill="#fff" stroke="#34609c"/><circle cx="16" cy="20" r="8" fill="#3c84d8"/><path d="M10 15q5-4 5 2l-4 8q-5-4-1-10zM20 15q4 4 2 8l-5 2z" fill="#3cac48"/></svg></button>
      <button title="历史记录"><svg viewBox="0 0 32 32"><circle cx="16" cy="16" r="14" fill="#dcecfc" stroke="#777" stroke-width="3"/><circle cx="16" cy="16" r="10" fill="none" stroke="#333" stroke-dasharray="1 4" stroke-width="2"/><path d="M16 6v10h8" fill="none" stroke="#123" stroke-width="2"/></svg></button>
      <button title="可视化"><svg viewBox="0 0 32 32"><path d="M2 1h12v30H2z" fill="url(#rainbow)"/><path d="M16 10l12 19" stroke="#111" stroke-width="4"/><path d="M14 1l2 5 5-1-3 4 3 4-5-1-3 4v-5l-4-3 5-2z" fill="#fff"/></svg></button>
      <button title="加工"><svg viewBox="0 0 32 32"><path d="M14 6h18M12 12h18l-9 8H10" stroke="#3468b8" fill="none" stroke-width="1.500"/><path d="M4 3h8v22H4z" fill="#54a4ec" stroke="#1c5498"/><path d="M4 10l8-4M4 16l8-5M4 22l8-5" stroke="#dff"/><path d="M0 27h16M4 31l8-8M12 31l-8-8" stroke="#ec3"/><path d="M16 10l12 19" stroke="#111" stroke-width="4"/><path d="M14 1l2 5 5-1-3 4 3 4-5-1-3 4v-5l-4-3 5-2z" fill="#fff"/></svg></button>
      <button title="系统工具"><svg viewBox="0 0 32 32"><path d="M12 4q7-5 14 0l3-1v6l-4-1-3-2-7 11-4-2 7-11z" fill="#ddd" stroke="#111" stroke-width="1.500"/><path d="M8 12l-1 5 3 2 3-4q3 3 0 7l8 4v5l-5-1-6-6q-5 1-8-4l4 0-1-4z" fill="#a0a4c4" stroke="#334"/><circle cx="5" cy="29" r="3" fill="#f80"/></svg></button>
    </nav>

    <aside>
      <h2>部件导航器<button title="浮动"></button></h2>
      <div class="tree">
        <div class="head">名称<i class="tri up"></i></div>
        <ul>
          <li><button class="pm plus" title="展开"></button><svg viewBox="0 0 24 24" fill="none" stroke="#208c58" stroke-width="1.500"><path d="M3 6l8-4 8 4v9l-8 5-8-5zM3 6l8 4 8-4M11 2v18M3 15l16-9M3 6l16 9"/><path d="M10 23l12-4" stroke="#d53"/></svg>模型视图</li>
          <li><button class="pm plus" title="展开"></button><svg class="tick" viewBox="0 0 24 24"><use href="#check"/></svg><svg viewBox="0 0 24 24"><path d="M2 7l17-5v16L2 22z" fill="#fbe4e0" stroke="#c33" stroke-width="1.500"/><circle cx="12" cy="12" r="5" fill="#336" stroke="#113"/><circle cx="12" cy="12" r="2" fill="#c9c"/><path d="M19 12h4v8h-4z" fill="#333"/></svg>摄像机</li>
          <li><button class="pm" title="折叠"></button><svg viewBox="0 0 24 24"><path d="M1 5h8l2 3h10v13H1z" fill="#c89018" stroke="#6c4c08"/><path d="M5 12h19l-4 9H1z" fill="#fbd85c" stroke="#6c4c08"/></svg>模型历史记录</li>
          <li class="sub"><input type="checkbox" id="datum" checked><svg viewBox="0 0 24 24"><use href="#csys"/></svg><label for="datum">基准坐标系 (0)</label></li>
          <li class="sub"><input type="checkbox" id="block" checked><svg viewBox="0 0 24 24"><use href="#cube"/></svg><label for="block"><b>块 (1)</b></label></li>
        </ul>
        <div class="hscroll"><button title="向左"><svg viewBox="0 0 12 12"><path d="M9 1L4 6l5 5" /></svg></button><i></i><button title="向右"><svg viewBox="0 0 12 12"><path d="M3 1l5 5-5 5"/></svg></button></div>
      </div>
      <div class="splitter"></div>
      <button class="fold">相关性<svg viewBox="0 0 14 14"><path d="M0 1h4l3 6 3-6h4L7 13z"/></svg></button>
      <button class="fold">细节<svg viewBox="0 0 14 14"><path d="M0 1h4l3 6 3-6h4L7 13z"/></svg></button>
      <button class="fold">预览<svg viewBox="0 0 14 14"><path d="M0 1h4l3 6 3-6h4L7 13z"/></svg></button>
    </aside>

    <section class="work">
      <div class="docs"><div class="doc"><svg viewBox="0 0 24 24"><path d="M4 4l7-3 4 2v9l8-1v7l-11 5-8-4z" fill="#2c68dc" stroke="#0c2c8c"/><path d="M4 4l5 2v14l-5-2z" fill="#9cc0fc"/></svg><span>lianxi3.prt</span><svg class="edit" viewBox="0 0 14 14" fill="none" stroke="#fff" stroke-width="2"><path d="M7 2H2v11h8V8M5 1l8 2-5 7"/></svg><button title="关闭"><svg class="edit" viewBox="0 0 12 12"><path d="M2 2l8 8M10 2l-8 8" stroke="#fff" stroke-width="3"/></svg></button></div></div>
      <svg class="canvas" viewBox="218 294 1702 712" preserveAspectRatio="xMinYMin slice" role="img" aria-label="块">
        <path d="M770 359l480-65h284l59 344-757 103z" fill="#a8a8a8" stroke="#333"/>
        <path d="M836 741l757-103 10 207-758 102z" fill="#323232" stroke="#555"/>
        <path d="M770 359l66 382 9 206-66-382z" fill="#4e4e4e" stroke="#333"/>
        <path d="M218 623.500h562M845 623.500h1075M812.500 294v297M812.500 759v247" stroke="#222"/>
        <path d="M812.500 655v104" stroke="#aaa"/>
        <path d="M754 608h6q12 4 20 15M786 576h8q10 4 16 15M786 640q16 4 26 15M818 608h8q12 4 19 15" fill="none" stroke="#888" stroke-dasharray="1 3"/>
        <g fill="#777"><path d="M866 666h1v1h-1zM872 663h1v1h-1zM897 680h1v1h-1zM904 695h1v1h-1zM840 697h1v1h-1zM929 711h1v1h-1zM1065 762h1v1h-1zM1033 794h1v1h-1zM1240 834h1v1h-1zM1175 830h1v1h-1zM957 779h1v1h-1zM1088 826h1v1h-1zM990 747h1v1h-1zM1340 870h1v1h-1zM1400 868h1v1h-1zM1460 843h1v1h-1zM1140 800h1v1h-1z"/></g>
        <path d="M1350 878h145M1342 870h122M1402 911h60M1385 853h75" stroke="#888" stroke-dasharray="1 11"/>
        <path d="M219 608v15M219 640v200M219 873v6" stroke="#777" stroke-dasharray="1 13"/>
        <circle cx="816" cy="627" r="14" fill="none" stroke="#222" stroke-width="3" stroke-dasharray="14 8" stroke-dashoffset="-4"/>
        <circle cx="816" cy="627" r="14" fill="none" stroke="#fff" stroke-width="2" stroke-dasharray="14 8" stroke-dashoffset="-4"/>
        <path d="M797 627h39M816 608v39" stroke="#000" stroke-width="4"/>
        <path d="M799 627h35M816 610v35" stroke="#fff" stroke-width="1.500"/>
        <path d="M837 891l65-9 9 55" fill="none" stroke="#ccc"/>
        <path d="M844 911l67-9v35M845 947l-19-98M845 947l-3-60M845 947l118-15M838 947h8v7M834 855l9 50" fill="none" stroke="#2020d0" stroke-width="1.500"/>
        <path d="M839 887l3-12 4 12zM961 928l17 2-16 5zM824 849l2-9 4 10z" fill="#00c"/>
        <g class="axis" fill="#2424c8"><text x="979" y="933">X</text><text x="821" y="835">Y</text><text x="837" y="877" fill="#aac">Z</text></g>
        <path d="M272 914l25-4 5 31-24 4z" fill="#d4d5d7" stroke="#999"/>
        <path d="M274 926l24-3M276 933l24-3" stroke="#999"/>
        <path d="M277 945l-6-33" stroke="#3a9a3a" stroke-width="2"/>
        <path d="M277 945v-18" stroke="#1020b0" stroke-width="3"/><path d="M273 930l4-9 4 9z" fill="#1020b0"/>
        <path d="M277 945l28-4" stroke="#c33" stroke-width="2"/><path d="M304 937l12 3-12 4z" fill="#c33"/>
        <circle cx="277" cy="945" r="4" fill="#bbb" stroke="#888"/>
        <g class="axis"><text x="317" y="944" fill="#c33">X</text><text x="267" y="912" fill="#3a9a3a">Y</text><text x="272" y="926" fill="#24c">Z</text></g>
      </svg>
    </section>
  </main>

  <div class="status"><span>选择对象并使用 MB3，或者双击某一对象</span>
    <svg viewBox="0 0 16 16"><path d="M1 1h14v14H1z" fill="#ddd" stroke="#999"/><path d="M3 6l3 6 3-8 3 8M9 9h4" stroke="#999" fill="none"/></svg>
    <svg viewBox="0 0 16 16"><path d="M1 4V1h3M12 1h3v3M15 12v3h-3M4 15H1v-3" fill="none" stroke="#888"/><path d="M4 4h8v8H4z" fill="url(#screen)" stroke="#333"/></svg>
  </div>

  <footer class="taskbar">
    <button class="start" title="开始"><svg viewBox="0 0 20 20"><path d="M0 3l9-1v8H0zM10 1l10-1v10H10zM0 11h9v7l-9-1zM10 11h10v9l-10-2z" fill="#fff"/></svg></button>
    <button class="find" title="搜索"><svg viewBox="0 0 20 20" fill="none" stroke="#fff" stroke-width="1.500"><circle cx="13" cy="7" r="6"/><path d="M9 12l-8 8"/></svg></button>
    <button class="task"><svg viewBox="0 0 30 30"><circle cx="15" cy="15" r="14" fill="#ffd040"/><path d="M15 15L3 8a14 14 0 0 0 10 21l7-11z" fill="#2da24c"/><path d="M3 8a14 14 0 0 1 24 1H15l-5 9z" fill="#e04438"/><circle cx="15" cy="15" r="6.500" fill="#fff"/><circle cx="15" cy="15" r="5" fill="#4285f4"/></svg>数控铣刀_百度图片...</button>
    <button class="task"><svg viewBox="0 0 30 30"><use href="#nxball"/></svg>www.51cnc.com...</button>
    <button class="task active"><svg viewBox="0 0 30 30"><use href="#nxball"/></svg>www.51cnc.com...</button>
    <button class="task"><svg viewBox="0 0 30 30"><circle cx="16" cy="15" r="14" fill="#ed6c47"/><path d="M16 1a14 14 0 0 1 14 14H16z" fill="#ff8f6b"/><path d="M1 7h15v15H1z" fill="#c43e1c"/><text x="4" y="19" font-size="13" font-weight="bold" fill="#fff">P</text></svg>从0开始学UG五轴....</button>
    <button class="task"><svg viewBox="0 0 30 30"><path d="M7 2h22v26H7z" fill="#185abd"/><path d="M7 2h22v7H7z" fill="#41a5ee"/><path d="M7 9h22v6H7z" fill="#2b7cd3"/><path d="M1 7h15v16H1z" fill="#103f91"/><text x="2" y="19" font-size="12" font-weight="bold" fill="#fff">W</text></svg>001UG五轴学习课...</button>
    <div class="tray">
      <button title="显示隐藏的图标"><svg viewBox="0 0 16 16"><path d="M1 12l7-8 7 8" fill="none" stroke="#fff" stroke-width="1.500"/></svg></button>
      <button>中</button>
      <button><b>M</b></button>
      <time>11:27<br>2020/2/14</time>
      <button title="通知"><svg viewBox="0 0 20 20"><path d="M0 1h20v15h-8l-3 4v-4H0z" fill="#fff"/><path d="M4 5h12M4 8h12M4 12h8" stroke="#0a0e14" stroke-width="1.500"/></svg></button>
    </div>
  </footer>
</body>

</html>
```
FILE: styles.css
```css
* {
  margin: 0;
  padding: 0;
  box-sizing: border-box;
}

body {
  display: flex;
  flex-direction: column;
  height: 100vh;
  overflow: hidden;
  background: #fff;
  color: #222;
  font-family: 'Noto Sans', 'Noto Sans CJK SC', sans-serif;
  font-size: 14px;
}

button {
  background: none;
  border: none;
  color: inherit;
  font: inherit;
  white-space: nowrap;
  display: flex;
  align-items: center;
  justify-content: center;
  flex: none;
}

svg {
  display: block;
  flex: none;
}

svg text {
  font-family: 'Liberation Sans', sans-serif;
}

.defs {
  position: absolute;
  width: 0;
  height: 0;
}

.sep {
  flex: none;
  width: 1px;
  background: #d4d4d4;
  align-self: stretch;
}

.tri,
.dd::before {
  content: '';
  display: block;
  flex: none;
  border: 4px solid transparent;
  border-top: 5px solid #222;
  border-bottom: 0;
}

.up::before,
.tri.up {
  border-top: 0;
  border-bottom: 5px solid #aaa;
}

.dd {
  width: 14px;
  height: 20px;
}

.dd.bar {
  flex-direction: column-reverse;
}

.dd.bar::after {
  content: '';
  width: 8px;
  height: 1px;
  margin-bottom: 2px;
  background: #222;
}

/* title bar */
.titlebar {
  display: flex;
  align-items: center;
  height: 36px;
  flex: none;
}

.titlebar .sep {
  margin: 4px 3px;
}

.nx {
  width: 44px;
  padding-left: 3px;
  font: bold 25px 'Liberation Sans', sans-serif;
  color: #8096a8;
}

.qa {
  width: 34px;
}

.qa svg {
  width: 22px;
  height: 22px;
}

.wide {
  gap: 4px;
  padding: 0 5px 0 4px;
}

.wide .tri {
  margin-left: 6px;
}

.wide svg {
  width: 24px;
  height: 24px;
}

.titlebar h1 {
  flex: 1;
  text-align: center;
  font-size: 15px;
  font-weight: normal;
}

.siemens {
  width: 90px;
  color: #0f8f8f;
  font-size: 16px;
  font-weight: bold;
}

.win {
  width: 30px;
}

.win svg {
  width: 14px;
  height: 14px;
}

/* ribbon tabs */
.tabs {
  display: flex;
  align-items: stretch;
  height: 40px;
  flex: none;
  padding-right: 3px;
  background: #dcdcdc;
  font-size: 16px;
}

.tabs button {
  padding: 0 13px;
}

.tabs .file {
  width: 95px;
  margin-right: 2px;
  background: #549eb7;
  color: #fff;
}

.tabs .active {
  background: #fff;
  color: #0e6a84;
  border-top: 1px solid #aaa;
}

.search {
  display: flex;
  align-items: center;
  margin: 8px 10px 8px auto;
  width: 157px;
  background: #fff;
  border: 1px solid #aaa;
}

.search input {
  flex: 1;
  min-width: 0;
  border: none;
  outline: none;
  background: none;
  padding-left: 2px;
  font: inherit;
  font-size: 14px;
}

.search input::placeholder {
  color: #aaa;
}

.search svg {
  width: 16px;
  height: 16px;
  margin-right: 3px;
}

.tabs .round {
  width: 46px;
  padding: 0;
}

.round svg {
  width: 30px;
  height: 30px;
}

/* ribbon */
.ribbon {
  display: grid;
  grid-template-columns: 154fr 427fr 174fr 150fr 75fr 83fr 76fr 144fr 41fr 423fr 62fr 76fr 35fr;
  height: 124px;
  flex: none;
  padding: 5px 0 4px;
  border-bottom: 1px solid #d0d0d0;
}

.group {
  display: flex;
  flex-direction: column;
  min-width: 0;
  border-right: 1px solid #d8d8d8;
}

.group.end {
  border: none;
  justify-content: flex-end;
}

.group .body {
  display: flex;
  flex: 1;
}

.group footer {
  display: flex;
  align-items: center;
  height: 18px;
  padding-right: 5px;
  color: #0e6a84;
  white-space: nowrap;
}

.group footer span {
  flex: 1;
  min-width: 0;
  text-align: center;
}

.group.end footer {
  justify-content: center;
  padding: 0;
}

.big {
  flex-direction: column;
  justify-content: flex-start;
  height: 88px;
  padding-top: 2px;
  line-height: 20px;
}

.big > svg {
  width: 44px;
  height: 44px;
  margin-bottom: 8px;
}

.big .tri {
  margin-top: 4px;
}

.big.first {
  margin-left: 17px;
}

.big.more {
  padding-top: 0;
}

.frame {
  display: flex;
  align-items: center;
  justify-content: center;
  width: 54px;
  height: 51px;
  margin-bottom: 3px;
  border: 1px solid #d8d8d8;
  border-radius: 3px;
}

.frame svg {
  width: 24px;
  height: 24px;
}

.gallery {
  display: flex;
  flex-direction: column;
  justify-content: space-around;
  width: 48px;
  height: 96px;
  margin-left: 17px;
  border: 1px solid #d8d8d8;
}

.gallery svg {
  width: 30px;
  height: 30px;
}

.scroller {
  display: flex;
  flex-direction: column;
  justify-content: space-around;
  height: 96px;
  margin-left: 3px;
}

.rows {
  display: flex;
  flex-direction: column;
  gap: 8px;
  width: 111px;
  padding-top: 1px;
}

.rows button {
  height: 24px;
  gap: 4px;
  justify-content: flex-start;
}

.rows svg {
  width: 24px;
  height: 24px;
}

.rows .tri {
  margin-left: 6px;
}

.features {
  padding-left: 14px;
}

.features .big {
  width: 46px;
}

.features .rows:nth-child(2) {
  width: 97px;
}

.features .big + .rows {
  width: 84px;
  margin-left: 13px;
}

.features .more {
  width: 54px;
}

.sync {
  padding-left: 16px;
}

.rows.icons {
  width: 37px;
  margin-left: 14px;
}

.grid2 {
  flex-direction: column;
  padding: 3px 4px;
}

.grid2 > div {
  display: flex;
  height: 42px;
  align-items: center;
}

.grid2 .sep {
  margin: 3px 2px;
}

.dims .sep {
  margin: 3px 4px;
}

.grid2.slim {
  padding-left: 2px;
}

.sm {
  width: 34px;
}

.sm svg {
  width: 24px;
  height: 24px;
  overflow: visible;
}

.plain {
  font: bold 14px 'Liberation Sans', sans-serif;
}

.plain i {
  color: #a22;
  font-style: normal;
}

.boxed {
  border: 1px solid #b33;
}

.tol,
.fit {
  font: 12px/11px 'Liberation Sans', sans-serif;
  text-align: center;
}

.tol small {
  color: #a22;
  font-size: 10px;
  line-height: 8px;
  display: inline-block;
}

.tol em {
  color: #999;
  font-style: normal;
}

.fit {
  color: #3030a8;
}

.fit small {
  display: inline-block;
  font-size: 9px;
  line-height: 8px;
  text-align: left;
}

.single {
  justify-content: center;
}

/* selection toolbar */
.toolbar {
  display: flex;
  align-items: center;
  gap: 2px;
  height: 68px;
  flex: none;
  padding-top: 1px;
  border-bottom: 1px solid #8c9090;
}

.toolbar > .sep {
  margin: 4px 0;
}

.menu {
  gap: 5px;
  width: 116px;
  padding-left: 7px;
}

.menu svg {
  width: 30px;
  height: 30px;
}

.toolbar select {
  appearance: none;
  height: 24px;
  padding: 0 20px 0 3px;
  border: 1px solid #999;
  border-radius: 0;
  color: #222;
  font: inherit;
  font-size: 14px;
  background: linear-gradient(to bottom right, #222 50%, transparent 50%) right 6px center / 5px 5px no-repeat,
    linear-gradient(to bottom left, #222 50%, transparent 50%) right 11px center / 5px 5px no-repeat, #fff;
}

.toolbar .filter {
  width: 168px;
  margin: 0 9px 0 12px;
}

.toolbar .scope {
  width: 177px;
  margin-right: 2px;
}

.tb {
  width: 42px;
  height: 40px;
}

.tb.on {
  background: #cce6ec;
  border: 1px solid #b0d4dc;
}

.tb svg {
  width: 30px;
  height: 30px;
}

.toolbar .view {
  margin-left: 4px;
}

.toolbar .dd {
  width: 12px;
}

.stack {
  display: flex;
  flex-direction: column;
  gap: 8px;
  padding: 0 11px 0 5px;
}

.stack svg {
  width: 24px;
  height: 24px;
}

.stack > div {
  display: flex;
  align-items: center;
  gap: 8px;
}

.stack.pairs {
  padding: 0 6px;
}

.toolbar .last {
  align-self: flex-end;
  margin-left: 8px;
}

/* main area */
main {
  display: flex;
  flex: 1;
  min-height: 0;
}

.rail {
  width: 40px;
  flex: none;
  display: flex;
  flex-direction: column;
  background: #dcdcdc;
  border-right: 1px solid #aaa;
}

.rail button {
  height: 50px;
}

.rail svg {
  width: 30px;
  height: 30px;
  margin-left: 5px;
}

.rail .gear {
  height: 26px;
  margin-bottom: 17px;
}

.rail .gear svg {
  width: 14px;
  height: 14px;
  margin: 0;
}

.rail .active {
  height: 54px;
  margin: -1px -1px -1px 2px;
  background: #fff;
  border: 1px solid #aaa;
  border-right: none;
}

.rail .active svg {
  margin-left: 0;
}

.rail button:nth-child(5) {
  height: 46px;
  margin-bottom: 8px;
}

.rail button:nth-child(n + 6) {
  height: 61px;
}

.rail button:nth-child(8) {
  margin-bottom: -4px;
}

.rail button:nth-child(n + 9) {
  height: 50px;
}

aside {
  width: 177px;
  flex: none;
  display: flex;
  flex-direction: column;
  padding: 0 9px 5px 6px;
}

aside h2 {
  display: flex;
  align-items: center;
  justify-content: space-between;
  height: 31px;
  padding: 0 7px 0 4px;
  font-size: 15px;
  font-weight: normal;
}

aside h2 button {
  width: 14px;
  height: 13px;
  border: 1px solid #111;
  border-top-width: 2px;
}

.tree {
  flex: 1;
  min-height: 0;
  display: flex;
  flex-direction: column;
  border: 1px solid #ccc;
  padding: 1px;
  font-size: 15px;
}

.head {
  display: flex;
  align-items: center;
  gap: 18px;
  height: 24px;
  flex: none;
  padding-left: 6px;
  background: #eee;
  border-bottom: 1px solid #ccc;
}

.tri.up {
  border-width: 0 6px 6px;
  border-bottom-color: #222;
}

.tree ul {
  flex: 1;
  min-height: 0;
  overflow: hidden;
  list-style: none;
  background: repeating-linear-gradient(#fff 0 23px, #eaeaea 23px 24px, #f9f9f9 24px 47px, #eaeaea 47px 48px);
}

.tree li {
  display: flex;
  align-items: center;
  gap: 4px;
  height: 24px;
  padding: 0 0 1px 4px;
  line-height: 22px;
  white-space: nowrap;
}

.tree li svg {
  width: 16px;
  height: 16px;
}

.tree li .tick {
  width: 12px;
  height: 12px;
}

.tree .tick + svg {
  margin-left: -2px;
}

.pm {
  width: 11px;
  height: 11px;
  border: 1px solid #ccc;
  background: linear-gradient(#222, #222) center / 7px 1px no-repeat, #fff;
}

.pm.plus {
  background: linear-gradient(#222, #222) center / 7px 1px no-repeat, linear-gradient(#222, #222) center / 1px 7px no-repeat, #fff;
}

.tree .sub {
  gap: 2px;
  margin-left: 28px;
  padding-left: 11px;
  border-left: 1px dotted #999;
}

.tree input {
  appearance: none;
  flex: none;
  width: 13px;
  height: 13px;
  border: 1px solid #111;
  background: #fff;
}

.tree input:checked::before {
  content: '✔';
  display: block;
  color: #1a9c2c;
  font: 13px/11px 'DejaVu Sans', sans-serif;
}

.hscroll {
  display: flex;
  align-items: stretch;
  height: 20px;
  flex: none;
  background: #f0f0f0;
}

.hscroll button {
  width: 21px;
}

.hscroll i {
  width: 46px;
  margin-right: auto;
  background: #ccc;
}

.hscroll svg {
  width: 11px;
  height: 11px;
  fill: none;
  stroke: #444;
  stroke-width: 2px;
}

.splitter {
  height: 5px;
  flex: none;
  background: #ddd;
  border: 1px solid #aaa;
}

.fold {
  justify-content: space-between;
  height: 28px;
  padding: 1px 6px 0 7px;
  border-bottom: 2px solid #ccc;
  color: #0e6a84;
  font-size: 18px;
  line-height: 24px;
}

.fold svg {
  width: 14px;
  height: 12px;
  fill: #0e6a84;
}

.work {
  flex: 1;
  min-width: 0;
  display: flex;
  flex-direction: column;
  border-left: 1px solid #8c9090;
}

.docs {
  height: 26px;
  flex: none;
  border-bottom: 2px solid #549eb7;
}

.doc {
  display: flex;
  align-items: center;
  gap: 5px;
  width: 136px;
  height: 24px;
  padding-left: 6px;
  background: #549eb7;
  color: #fff;
  font-size: 15px;
}

.doc svg {
  width: 15px;
  height: 15px;
}

.doc .edit {
  width: 10px;
  height: 12px;
}

.canvas {
  flex: 1;
  min-height: 0;
  width: 100%;
  background: linear-gradient(#b0b0b2, #c8c9cb 32%, #d6d7d9 48%, #e5e7e9 78%, #e7e9ea);
}

.axis {
  font-size: 12px;
}

/* status line */
.status {
  display: flex;
  align-items: center;
  gap: 6px;
  height: 24px;
  flex: none;
  padding: 0 58px 1px 4px;
  border-top: 1px solid #aaa;
  font-weight: bold;
  font-size: 14px;
  line-height: 20px;
}

.status span {
  flex: 1;
}

.status svg {
  width: 16px;
  height: 16px;
}

/* windows taskbar */
.taskbar {
  display: flex;
  align-items: stretch;
  gap: 11px;
  height: 50px;
  flex: none;
  background: #060a10;
  color: #fff;
  font-size: 15px;
}

.start {
  width: 60px;
}

.start svg,
.find svg {
  width: 20px;
  height: 20px;
}

.find {
  width: 38px;
  margin-right: 9px;
}

.task {
  gap: 5px;
  width: 190px;
  padding: 0 8px;
  justify-content: flex-start;
  border-bottom: 3px solid #76b9ed;
}

.task svg {
  width: 29px;
  height: 29px;
}

.task.active {
  width: 200px;
  margin: 0 -5px;
  padding-left: 13px;
  background: #3a3d42;
}

.tray {
  display: flex;
  align-items: center;
  gap: 17px;
  margin-left: auto;
  padding-right: 31px;
}

.tray svg {
  width: 16px;
  height: 16px;
}

.tray b {
  width: 18px;
  background: #fff;
  color: #060a10;
  font-size: 15px;
  line-height: 18px;
}

.tray time {
  padding: 0 8px;
  text-align: center;
  font-size: 15px;
  line-height: 23px;
}

.tray button:last-child svg {
  width: 20px;
  height: 20px;
}
```
